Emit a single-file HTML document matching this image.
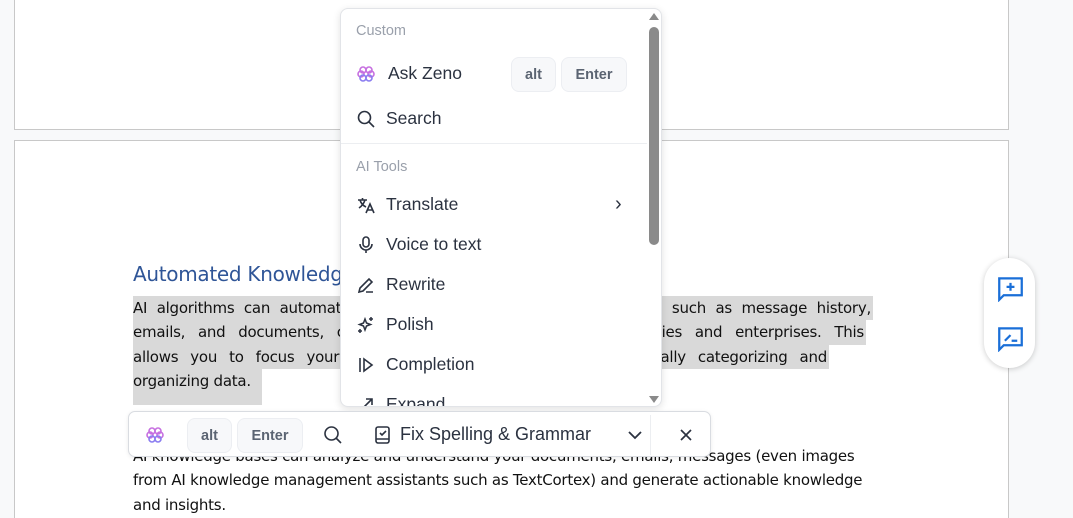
<!DOCTYPE html>
<html><head><style>
*{box-sizing:border-box;margin:0;padding:0}
html,body{width:1073px;height:518px;overflow:hidden}
body{background:#f8f9fa;font-family:"Liberation Sans",sans-serif;position:relative}
.pg{position:absolute;left:14px;width:995px;background:#fff;border:1px solid #c8c8c8}
.doc{position:absolute;left:133px;font-family:"DejaVu Sans","Liberation Sans",sans-serif;font-size:15px;line-height:24.3px;color:#111;width:760px;letter-spacing:-0.25px}
.hl{background:#d9d9d9;display:block;height:24.3px;white-space:nowrap;text-align:justify;text-align-last:justify;padding-right:2px}
.menu{position:absolute;left:340px;top:8px;width:322px;height:399px;background:#fff;border:1px solid #e2e4e8;border-radius:8px;box-shadow:0 2px 8px rgba(0,0,0,.12);overflow:hidden}
.sec{position:absolute;left:15px;font-size:14.5px;color:#9aa0ab}
.it{position:absolute;left:15px;font-size:17.5px;color:#2b3240;display:flex;align-items:center}
.it svg{width:20px;height:20px;margin-right:10px}
.kb{position:absolute;height:35px;border:1px solid #eceef2;background:#f7f8fa;border-radius:8px;font-size:14.5px;font-weight:bold;color:#5b6472;display:flex;align-items:center;justify-content:center}
.bar{position:absolute;left:128px;top:411px;width:583px;height:46px;background:#fff;border:1px solid #d9dce1;border-radius:7px;box-shadow:0 1px 4px rgba(0,0,0,.08)}
</style></head><body>
<div class="pg" style="top:-5px;height:135px"></div>
<div class="pg" style="top:140px;height:400px"></div>
<div style="position:absolute;left:133px;top:262px;font-family:'DejaVu Sans',sans-serif;font-size:20px;color:#2f5597;letter-spacing:-0.3px">Automated Knowledge Organization</div>
<div class="doc" style="top:296px">
<span class="hl" style="width:740px;white-space:normal">AI algorithms can automatically organize and categorize your data, such as message history,</span>
<span class="hl" style="width:733px;white-space:normal">emails, and documents, creating a knowledge base for companies and enterprises. This</span>
<span class="hl" style="width:696px;white-space:normal">allows you to focus your time on other tasks instead of manually categorizing and</span>
<span class="hl" style="width:129px;height:36px;text-align:left;text-align-last:left">organizing data.</span></div>
<div class="doc" style="top:444px">AI knowledge bases can analyze and understand your documents, emails, messages (even images<br>from AI knowledge management assistants such as TextCortex) and generate actionable knowledge<br>and insights.</div>

<div class="menu">
<div class="sec" style="top:14px">Custom</div>
<div class="it" style="top:54px"><svg viewBox="0 0 20 20"><g fill="none" stroke="#c66fe0" stroke-width="1.6"><circle cx="7" cy="6" r="3"/><circle cx="13" cy="6" r="3"/><circle cx="5" cy="10" r="3"/><circle cx="15" cy="10" r="3"/><circle cx="7" cy="14" r="3" stroke="#8a7cf0"/><circle cx="13" cy="14" r="3" stroke="#8a7cf0"/></g></svg><span style="margin-left:2px">Ask Zeno</span></div>
<div class="kb" style="left:170px;top:48px;width:45px">alt</div>
<div class="kb" style="left:220px;top:48px;width:66px">Enter</div>
<div class="it" style="top:99px"><svg viewBox="0 0 20 20" fill="none" stroke="#2b3240" stroke-width="1.6"><circle cx="8.5" cy="8.5" r="6"/><path d="M13 13l5 5"/></svg>Search</div>
<div style="position:absolute;left:0;top:134px;width:306px;height:1px;background:#eceef1"></div>
<div class="sec" style="top:150px">AI Tools</div>
<div class="it" style="top:185px"><svg viewBox="0 0 20 20" fill="none" stroke="#2b3240" stroke-width="1.6"><path d="M2 5h9M6.5 3v2M4 5c1 4 4 6 6 7M9 5c-1 3-3 6-6 8M10 18l4-9 4 9M11.5 15h5"/></svg>Translate</div>
<div style="position:absolute;left:274px;top:184px;font-size:20px;color:#2b3240">&#8250;</div>
<div class="it" style="top:225px"><svg viewBox="0 0 20 20" fill="none" stroke="#2b3240" stroke-width="1.6"><rect x="7" y="2" width="6" height="10" rx="3"/><path d="M4 9a6 6 0 0 0 12 0M10 15v3"/></svg>Voice to text</div>
<div class="it" style="top:265px"><svg viewBox="0 0 20 20" fill="none" stroke="#2b3240" stroke-width="1.6"><path d="M3 17l1-4L13 4l3 3-9 9-4 1zM10 17h7"/></svg>Rewrite</div>
<div class="it" style="top:305px"><svg viewBox="0 0 20 20" fill="none" stroke="#2b3240" stroke-width="1.5"><path d="M9 4l1.5 4 4 1.5-4 1.5L9 15l-1.5-4-4-1.5 4-1.5zM15 2v4M13 4h4M4 14v4M2 16h4"/></svg>Polish</div>
<div class="it" style="top:345px"><svg viewBox="0 0 20 20" fill="none" stroke="#2b3240" stroke-width="1.6"><path d="M4 3v14M8 4l8 6-8 6z"/></svg>Completion</div>
<div class="it" style="top:385px"><svg viewBox="0 0 20 20" fill="none" stroke="#2b3240" stroke-width="1.6"><path d="M4 16L16 4M10 4h6v6"/></svg>Expand</div>
<div style="position:absolute;left:308px;top:4px;width:0;height:0;border-left:5px solid transparent;border-right:5px solid transparent;border-bottom:7px solid #8a8a8a"></div>
<div style="position:absolute;left:308px;top:18px;width:10px;height:218px;background:#8a8a8a;border-radius:5px"></div>
<div style="position:absolute;left:308px;top:387px;width:0;height:0;border-left:5px solid transparent;border-right:5px solid transparent;border-top:7px solid #8a8a8a"></div>
</div>

<div class="bar">
<svg style="position:absolute;left:15px;top:13px" width="22" height="20" viewBox="0 0 20 20"><g fill="none" stroke="#c66fe0" stroke-width="1.6"><circle cx="7" cy="6" r="3"/><circle cx="13" cy="6" r="3"/><circle cx="5" cy="10" r="3"/><circle cx="15" cy="10" r="3"/><circle cx="7" cy="14" r="3" stroke="#8a7cf0"/><circle cx="13" cy="14" r="3" stroke="#8a7cf0"/></g></svg>
<div class="kb" style="left:58px;top:6px;width:45px">alt</div>
<div class="kb" style="left:108px;top:6px;width:66px">Enter</div>
<svg style="position:absolute;left:194px;top:13px" width="20" height="20" viewBox="0 0 20 20" fill="none" stroke="#2b3240" stroke-width="1.6"><circle cx="8.5" cy="8.5" r="6.5"/><path d="M13 13l5 5"/></svg>
<svg style="position:absolute;left:244px;top:13px" width="20" height="20" viewBox="0 0 20 20" fill="none" stroke="#2b3240" stroke-width="1.6"><rect x="3" y="2" width="13" height="16" rx="2"/><path d="M3 14h13M7 8l2 2 4-4"/></svg>
<div style="position:absolute;left:271px;top:12px;font-size:18px;color:#2b3240">Fix Spelling &amp; Grammar</div>
<svg style="position:absolute;left:498px;top:16px" width="16" height="14" viewBox="0 0 16 14" fill="none" stroke="#2b3240" stroke-width="1.8"><path d="M2 4l6 6 6-6"/></svg>
<div style="position:absolute;left:521px;top:3px;width:1px;height:40px;background:#eceef1"></div>
<svg style="position:absolute;left:550px;top:16px" width="14" height="14" viewBox="0 0 14 14" stroke="#2b3240" stroke-width="1.7"><path d="M2 2l10 10M12 2L2 12"/></svg>
</div>

<div style="position:absolute;left:984px;top:258px;width:51px;height:110px;background:#fff;border-radius:26px;box-shadow:0 1px 6px rgba(0,0,0,.2)"></div>
<svg style="position:absolute;left:997px;top:275px" width="27" height="27" viewBox="0 0 24 24" fill="none" stroke="#1a6fd8" stroke-width="2"><path d="M2 3h20v15H6l-4 4z"/><path d="M12 7v7M8.5 10.5h7"/></svg>
<svg style="position:absolute;left:997px;top:325px" width="27" height="27" viewBox="0 0 24 24" fill="none" stroke="#1a6fd8" stroke-width="2"><path d="M2 3h20v15H6l-4 4z"/><path d="M7 14l5-5M13 14h5"/></svg>
</body></html>
